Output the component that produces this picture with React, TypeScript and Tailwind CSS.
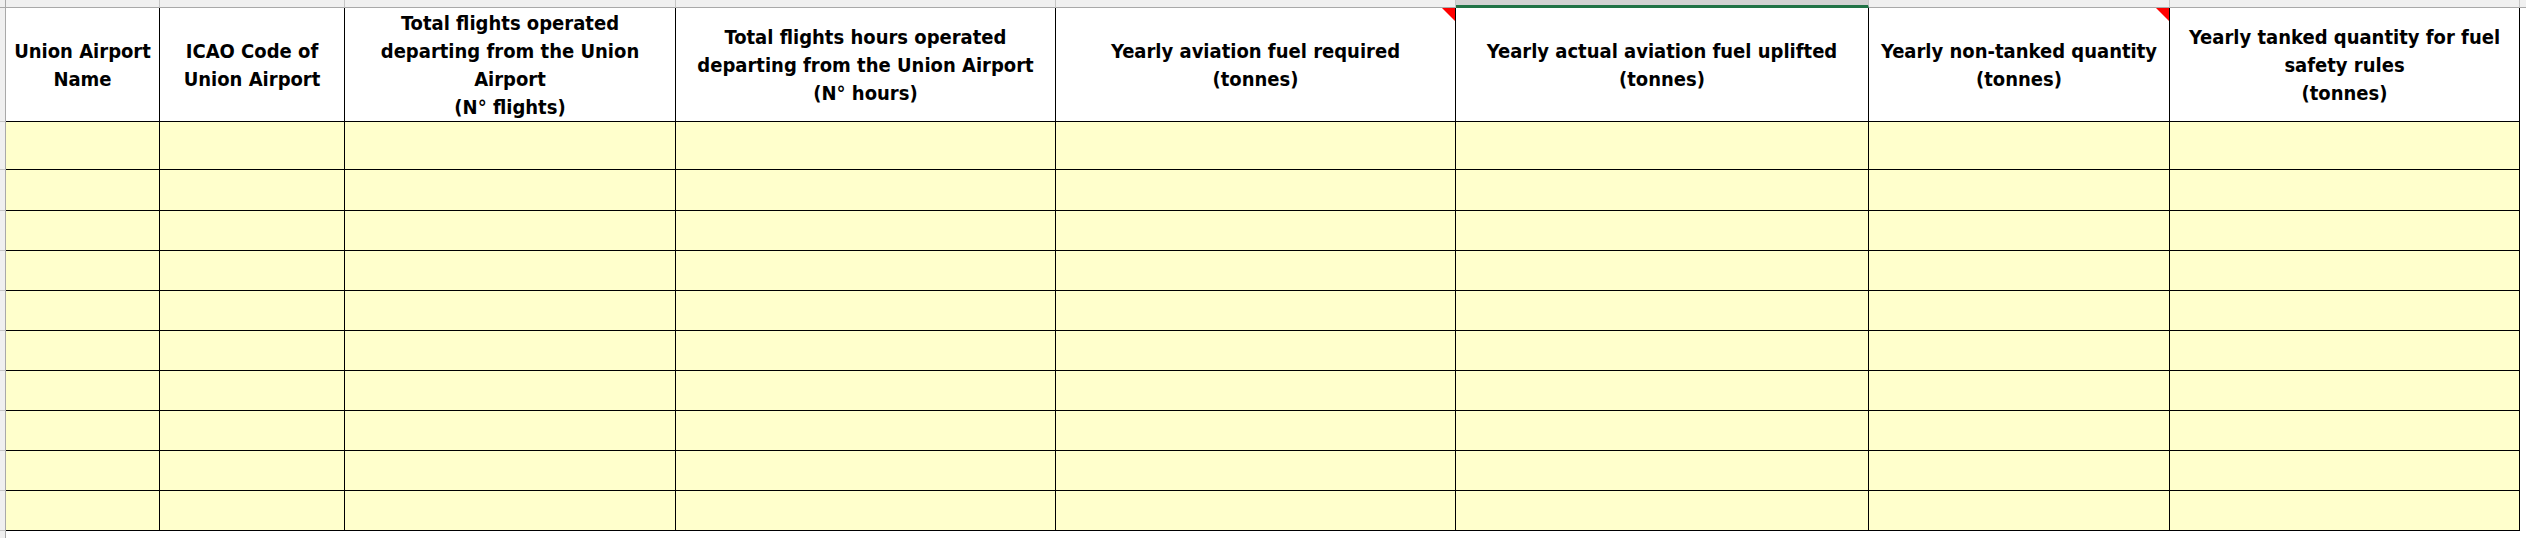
import React from "react";

type Col = {
  w: string;
  lines: string[];
  note?: boolean;
  selected?: boolean;
};

const cols: Col[] = [
  { w: "w-[154px]", lines: ["Union Airport", "Name"] },
  { w: "w-[185px]", lines: ["ICAO Code of", "Union Airport"] },
  {
    w: "w-[331px]",
    lines: ["Total flights operated", "departing from the Union", "Airport", "(N° flights)"],
  },
  {
    w: "w-[380px]",
    lines: ["Total flights hours operated", "departing from the Union Airport", "(N° hours)"],
  },
  { w: "w-[400px]", lines: ["Yearly aviation fuel required", "(tonnes)"], note: true },
  { w: "w-[413px]", lines: ["Yearly actual aviation fuel uplifted", "(tonnes)"], selected: true },
  { w: "w-[301px]", lines: ["Yearly non-tanked quantity", "(tonnes)"], note: true },
  {
    w: "w-[350px]",
    lines: ["Yearly tanked quantity for fuel", "safety rules", "(tonnes)"],
  },
];

const rowHeights = [
  "h-[48px]",
  "h-[41px]",
  "h-[40px]",
  "h-[40px]",
  "h-[40px]",
  "h-[40px]",
  "h-[40px]",
  "h-[40px]",
  "h-[40px]",
  "h-[40px]",
];

function NoteMark() {
  return (
    <span className="absolute top-0 right-0 w-0 h-0 border-l-[13px] border-l-transparent border-t-[13px] border-t-[#ff0000]" />
  );
}

export default function App() {
  return (
    <div className="w-[2526px] h-[538px] bg-white flex flex-col overflow-hidden font-['DejaVu_Sans_Condensed','DejaVu_Sans',sans-serif] font-stretch-condensed">
      {/* column header strip */}
      <div className="flex h-[8px] shrink-0">
        <div className="w-[6px] shrink-0 bg-[#f0f0f0] border-r border-b border-[#a9a9a9]" />
        {cols.map((c, i) =>
          c.selected ? (
            <div
              key={i}
              className={`${c.w} shrink-0 bg-[#d2d2d2] border-r border-r-[#c6c6c6] border-b-[3px] border-b-[#217346]`}
            />
          ) : (
            <div
              key={i}
              className={`${c.w} shrink-0 bg-[#f0f0f0] border-r border-r-[#c6c6c6] border-b border-b-[#a9a9a9]`}
            />
          )
        )}
        <div className="flex-1 bg-[#f0f0f0] border-b border-[#a9a9a9]" />
      </div>

      {/* header row */}
      <div className="flex h-[114px] shrink-0">
        <div className="w-[6px] shrink-0 bg-[#f0f0f0] border-r border-b border-r-[#a9a9a9] border-b-[#c6c6c6]" />
        {cols.map((c, i) => (
          <div
            key={i}
            className={`${c.w} relative shrink-0 flex flex-col items-center justify-center border-r border-b border-black bg-white text-center text-[20px] leading-[28px] font-bold text-black`}
          >
            {c.lines.map((l, j) => (
              <span key={j} className="whitespace-nowrap">
                {l}
              </span>
            ))}
            {c.note && <NoteMark />}
          </div>
        ))}
      </div>

      {/* data rows */}
      {rowHeights.map((h, r) => (
        <div key={r} className={`flex ${h} shrink-0`}>
          <div className="w-[6px] shrink-0 bg-[#f0f0f0] border-r border-b border-r-[#a9a9a9] border-b-[#c6c6c6]" />
          {cols.map((c, i) => (
            <div
              key={i}
              className={`${c.w} shrink-0 bg-[#ffffcc] border-r border-b border-black`}
            />
          ))}
        </div>
      ))}

      <div className="flex flex-1">
        <div className="w-[6px] shrink-0 bg-[#f0f0f0] border-r border-[#a9a9a9]" />
        <div className="flex-1 bg-white" />
      </div>
    </div>
  );
}
